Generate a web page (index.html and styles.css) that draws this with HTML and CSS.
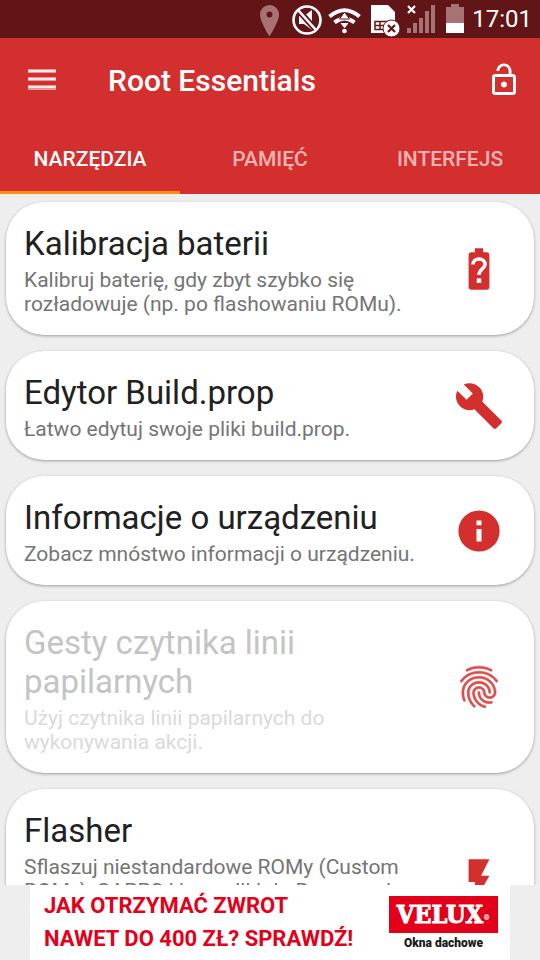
FILE: index.html
```html
<!DOCTYPE html>
<html lang="pl">
<head>
<meta charset="utf-8">
<meta name="viewport" content="width=device-width, initial-scale=1">
<title>Root Essentials</title>
<link rel="stylesheet" href="styles.css">
</head>
<body>
<div class="screen">
  <div class="status">
    <svg width="27" height="38" viewBox="259 0 27 38" fill="#a67274"><path fill-rule="evenodd" d="M269.500 5a9.500 9.500 0 0 0-9.500 9.500c0 7 9.500 22 9.500 22s9.500-15 9.500-22a9.500 9.500 0 0 0-9.500-9.500zm0 6.500a3 3 0 1 1 0 6 3 3 0 0 1 0-6z"/></svg>
    <svg width="30" height="38" viewBox="292 0 30 38" fill="none" stroke="#fff" stroke-width="2.600"><circle cx="307" cy="20" r="13.500"/><path fill="#fff" stroke="none" d="M299 16h5l8-6v20l-8-6h-5z"/><path stroke="#611517" stroke-width="6" d="M300 12l15 17"/><path d="M298 10l18 20"/></svg>
    <svg width="37" height="38" viewBox="328 0 37 38" fill="none" stroke="#fff" stroke-width="4"><path d="M329.500 16.500q15-12.500 30 0M334.500 22.500q10-8 20 0"/><circle cx="344.500" cy="31" r="2.300" fill="#fff" stroke="none"/><path fill="#fff" stroke="#611517" stroke-width="1" d="M344.500 12l5 7h-10zM344.500 29l5-6.500h-10z"/></svg>
    <svg width="30" height="38" viewBox="371 0 30 38"><path fill="#fff" d="M371 5h17l7 7v21h-24z"/><path fill="none" stroke="#611517" stroke-width="1.500" d="M375 21.500h16v8h-16zM375 25.500h16M380 21.500v8M386 21.500v8"/><circle cx="391.500" cy="28.500" r="8.500" fill="#fff" stroke="#611517"/><path stroke="#611517" stroke-width="2.200" d="M388 25l7 7M395 25l-7 7"/></svg>
    <svg width="33" height="38" viewBox="407 0 33 38" fill="#a67274"><path d="M407 28h4v5h-4zM413 23h4v10h-4zM419 18h4v15h-4zM425 11h4v22h-4zM431 5h4v28h-4z"/><path stroke="#fff" stroke-width="2.200" d="M408 6l7 7M415 6l-7 7"/></svg>
    <svg width="20" height="38" viewBox="446 0 20 38"><path fill="#a67274" d="M446 7h5V4h8v3h5v16h-18z"/><path fill="#fff" d="M446 23h18v10h-18z"/></svg>
    <span class="clock">17:01</span>
  </div>

  <header class="header">
    <div class="toolbar">
      <button class="icon-button" aria-label="Menu"><svg width="28" height="22" viewBox="0 0 28 22"><path fill="#fff" opacity=".5" d="M0 0h28v4H0zM0 8h28v4H0zM0 16h28v5H0z"/><path fill="#fff" opacity=".8" d="M0 1h28v2H0zM0 9h28v2H0zM0 17h28v2H0z"/></svg></button>
      <h1 class="app-title">Root Essentials</h1>
      <button class="icon-button" aria-label="Odblokuj"><svg width="36" height="36" viewBox="0 0 24 24" fill="#fff"><path d="M12 17c1.100 0 2-.9 2-2s-.9-2-2-2-2 .9-2 2 .9 2 2 2zm6-9h-1V6c0-2.760-2.240-5-5-5S7 3.240 7 6h1.900c0-1.710 1.390-3.100 3.100-3.100 1.710 0 3.100 1.390 3.100 3.100v2H6c-1.100 0-2 .9-2 2v10c0 1.100.9 2 2 2h12c1.100 0 2-.9 2-2V10c0-1.100-.9-2-2-2zm0 12H6V10h12v10z"/></svg></button>
    </div>
    <nav class="tabs">
      <a class="tab tab-active" href="#narzedzia">NARZĘDZIA</a>
      <a class="tab" href="#pamiec">PAMIĘĆ</a>
      <a class="tab" href="#interfejs">INTERFEJS</a>
    </nav>
  </header>

  <main class="list">
    <article class="card">
      <div class="card-text"><h2>Kalibracja baterii</h2><p>Kalibruj baterię, gdy zbyt szybko się rozładowuje (np. po flashowaniu ROMu).</p></div>
      <svg class="card-icon" viewBox="0 0 24 24"><path d="M15.670 4H14V2h-4v2H8.330C7.600 4 7 4.600 7 5.330v15.330C7 21.400 7.600 22 8.330 22h7.330c.74 0 1.340-.6 1.340-1.330V5.330C17 4.600 16.400 4 15.670 4z"/><path fill="none" stroke="#fff" stroke-width="1.700" d="M9.100 9.900c0-1.700 1.200-2.700 2.900-2.700s2.900 1.100 2.900 2.600c0 2-2.900 2.300-2.900 5.100"/><path fill="#fff" d="M10.900 16.500h2.200v2.200h-2.200z"/></svg>
    </article>
    <article class="card">
      <div class="card-text"><h2>Edytor Build.prop</h2><p>Łatwo edytuj swoje pliki build.prop.</p></div>
      <svg class="card-icon" viewBox="0 0 24 24"><path d="M22.700 19l-9.100-9.100c.9-2.300.4-5-1.500-6.900-2-2-5-2.400-7.400-1.300L9 6 6 9 1.600 4.700C.4 7.100.9 10.100 2.900 12.100c1.900 1.900 4.600 2.400 6.900 1.500l9.100 9.100c.4.400 1 .4 1.400 0l2.300-2.300c.5-.4.5-1.100.1-1.400z"/></svg>
    </article>
    <article class="card">
      <div class="card-text"><h2>Informacje o urządzeniu</h2><p>Zobacz mnóstwo informacji o urządzeniu.</p></div>
      <svg class="card-icon" viewBox="0 0 24 24"><circle cx="12" cy="12" r="9.900"/><path fill="#fff" d="M10.800 11h2.400v6h-2.400zM10.800 7h2.400v2.200h-2.400z"/></svg>
    </article>
    <article class="card card-disabled">
      <div class="card-text"><h2>Gesty czytnika linii papilarnych</h2><p>Użyj czytnika linii papilarnych do wykonywania akcji.</p></div>
      <svg class="card-icon" viewBox="0 0 24 24"><path d="M17.810 4.470c-.08 0-.16-.02-.23-.06C15.660 3.420 14 3 12.010 3c-1.980 0-3.860.47-5.570 1.410-.24.130-.54.040-.68-.2-.13-.24-.04-.55.200-.68C7.820 2.520 9.860 2 12.010 2c2.130 0 3.990.47 6.030 1.520.25.130.34.430.21.670-.09.180-.26.280-.44.280zM3.500 9.720c-.1 0-.2-.03-.29-.09-.23-.16-.28-.47-.12-.7.990-1.400 2.250-2.500 3.750-3.270C9.980 4.040 14 4.030 17.150 5.650c1.500.77 2.760 1.860 3.750 3.250.16.220.11.540-.12.700-.23.160-.54.110-.7-.12-.9-1.260-2.040-2.250-3.390-2.940-2.870-1.470-6.540-1.470-9.400.01-1.360.7-2.500 1.700-3.400 2.960-.08.140-.23.210-.39.210zm6.250 12.070c-.13 0-.26-.05-.35-.15-.87-.87-1.340-1.430-2.010-2.640-.69-1.230-1.050-2.730-1.050-4.340 0-2.970 2.540-5.390 5.660-5.390s5.660 2.420 5.660 5.390c0 .28-.22.500-.5.500s-.5-.22-.5-.5c0-2.420-2.090-4.390-4.660-4.390-2.570 0-4.660 1.970-4.660 4.390 0 1.440.32 2.770.93 3.850.64 1.150 1.080 1.640 1.850 2.420.19.200.19.510 0 .71-.11.100-.24.150-.37.150zm7.170-1.850c-1.190 0-2.240-.3-3.100-.89-1.490-1.010-2.380-2.650-2.380-4.390 0-.28.220-.5.500-.5s.5.220.5.500c0 1.410.72 2.740 1.940 3.560.71.480 1.540.71 2.540.71.240 0 .64-.03 1.040-.1.270-.05.530.13.580.41.050.27-.13.530-.41.580-.57.110-1.070.12-1.210.12zM14.910 22c-.04 0-.09-.01-.13-.02-1.590-.44-2.630-1.030-3.720-2.100-1.400-1.390-2.170-3.240-2.170-5.220 0-1.620 1.380-2.940 3.080-2.940 1.700 0 3.080 1.320 3.080 2.940 0 1.070.93 1.940 2.080 1.940s2.080-.87 2.080-1.940c0-3.770-3.250-6.830-7.250-6.830-2.840 0-5.440 1.580-6.610 4.030-.39.810-.59 1.760-.59 2.800 0 .78.070 2.010.67 3.610.1.260-.03.550-.29.640-.26.100-.55-.04-.64-.29-.49-1.310-.73-2.610-.73-3.960 0-1.200.23-2.290.68-3.240 1.330-2.790 4.280-4.600 7.510-4.600 4.550 0 8.250 3.510 8.250 7.830 0 1.620-1.380 2.940-3.080 2.940s-3.080-1.320-3.080-2.940c0-1.070-.93-1.940-2.080-1.940s-2.080.87-2.080 1.940c0 1.710.66 3.310 1.870 4.510.95.940 1.860 1.460 3.270 1.850.27.070.42.350.35.610-.05.230-.26.380-.47.380z"/></svg>
    </article>
    <article class="card">
      <div class="card-text"><h2>Flasher</h2><p>Sflaszuj niestandardowe ROMy (Custom ROMy), GAPPS i inne pliki do Recovery i zainstaluj wybrane pliki zip, a urządzenie uruchomi się ponownie.</p></div>
      <svg class="card-icon" viewBox="0 0 24 24"><path d="M7 2v11h3v9l7-12h-4l4-8z"/></svg>
    </article>
  </main>

  <footer class="ad-bar">
    <a class="ad" href="#velux">
      <span class="ad-copy">JAK OTRZYMAĆ ZWROT<br>NAWET DO 400 ZŁ? SPRAWDŹ!</span>
      <span class="brand"><span class="brand-name">VELUX<small>®</small></span><span class="brand-note">Okna dachowe</span></span>
    </a>
  </footer>
</div>
</body>
</html>
```

FILE: styles.css
```css
* { box-sizing: border-box; }

body {
  margin: 0;
  background: #eee;
  color: #212121;
  font-family: Roboto, "Noto Sans", sans-serif;
}

h1, h2, p { margin: 0; font-weight: 400; }
svg { display: block; flex: none; }
a { text-decoration: none; }

.screen {
  display: flex;
  flex-direction: column;
  height: 100vh;
  overflow: hidden;
}

.status {
  display: flex;
  flex: none;
  align-items: center;
  justify-content: flex-end;
  gap: 6px;
  height: 38px;
  padding-right: 8px;
  background: #611517;
}

.clock { color: #fff; font-size: 24px; line-height: 38px; }

.header { flex: none; background: #d32f2f; color: #fff; }

.toolbar {
  display: flex;
  align-items: center;
  height: 84px;
  padding: 0 18px 0 28px;
}

.icon-button {
  padding: 0;
  border: 0;
  background: none;
}

.app-title {
  flex: 1;
  margin-left: 52px;
  font-size: 30px;
  font-weight: 500;
}

.tabs { display: grid; grid-template-columns: repeat(3, 1fr); }

.tab {
  height: 72px;
  border-bottom: 3px solid transparent;
  color: #f4b5b2;
  font-size: 21px;
  font-weight: 500;
  line-height: 74px;
  text-align: center;
}

.tab-active { border-color: #ff8f14; color: #fff; }

.list {
  display: flex;
  flex: 1;
  flex-direction: column;
  gap: 16px;
  min-height: 0;
  padding: 8px 6px;
  overflow: hidden;
}

.card {
  display: flex;
  flex: none;
  align-items: center;
  gap: 34px;
  padding: 19px 30px 19px 18px;
  border-radius: 38px;
  background: #fff;
  box-shadow: 0 1px 3px rgba(0, 0, 0, .35);
}

.card-text { flex: 1; padding-top: 3px; }
.card h2 { font-size: 33px; line-height: 39px; }

.card p {
  margin-top: 5px;
  color: #757575;
  font-size: 21px;
  line-height: 24px;
}

.card-icon { width: 50px; height: 50px; fill: #d32f2f; }
.card-disabled h2 { color: #c4c4c4; }
.card-disabled p { color: #dadada; }
.card-disabled .card-icon { stroke: #d32f2f; stroke-width: .3px; opacity: .85; }

.ad-bar {
  display: flex;
  flex: none;
  justify-content: center;
  background: #eee;
}

.ad {
  display: flex;
  justify-content: space-between;
  width: 480px;
  height: 75px;
  padding: 4px 12px 0 14px;
  background: #fff;
}

.ad-copy {
  color: #e2001a;
  font-size: 22px;
  font-weight: 700;
  line-height: 33px;
  white-space: nowrap;
}

.brand {
  display: flex;
  flex-direction: column;
  align-items: center;
  padding-top: 7px;
}

.brand-name {
  width: 109px;
  background: #e2001a;
  color: #fff;
  font-family: "DejaVu Serif Condensed", "DejaVu Serif", serif;
  font-size: 25px;
  font-weight: 700;
  line-height: 37px;
  text-align: center;
  -webkit-text-stroke: 1px #fff;
}

.brand-name small {
  font-size: 8px;
  line-height: 8px;
  vertical-align: middle;
  -webkit-text-stroke: 0;
}

.brand-note {
  color: #1a1a1a;
  font-size: 12px;
  font-weight: 900;
  line-height: 20px;
}
```
